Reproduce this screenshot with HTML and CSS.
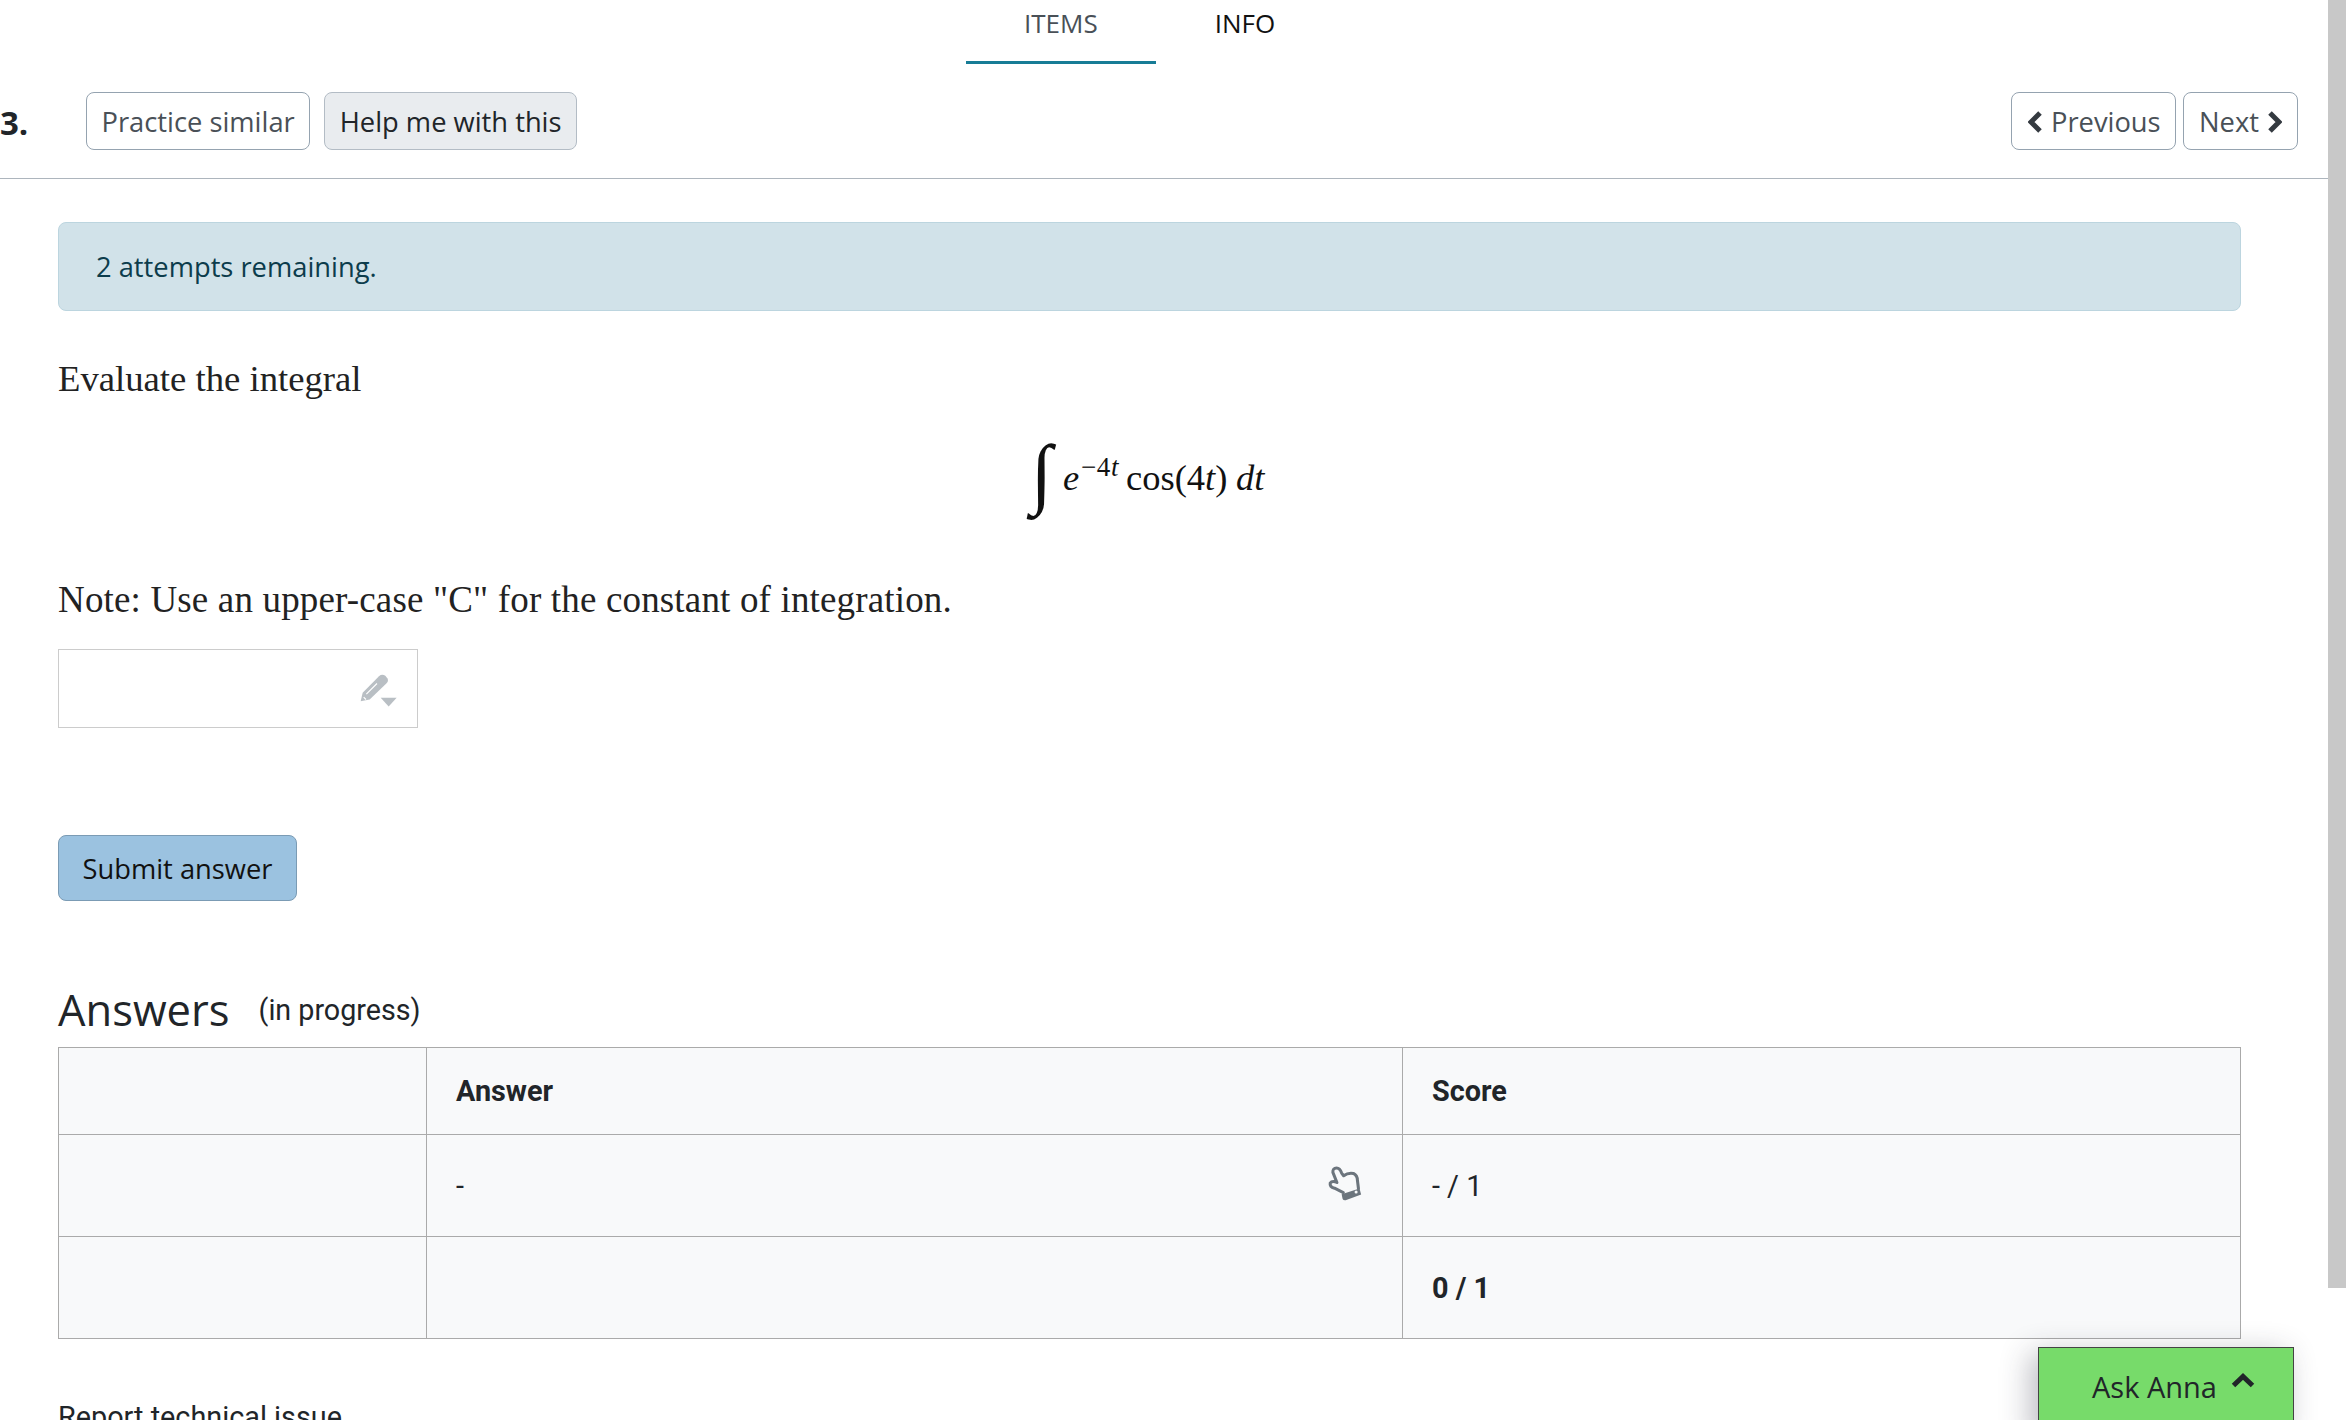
FILE: index.html
```html
<!DOCTYPE html>
<html lang="en">
<head>
<meta charset="utf-8">
<title>Question 3</title>
<link rel="stylesheet" href="styles.css">
</head>
<body>
<div class="page">
  <nav class="tabs">
    <a class="tab tab-active">ITEMS</a>
    <a class="tab">INFO</a>
  </nav>
  <header class="toolbar">
    <span class="qnum">3.</span>
    <button class="btn btn-practice">Practice similar</button>
    <button class="btn btn-help">Help me with this</button>
    <span class="spacer"></span>
    <button class="btn btn-prev">
      <svg class="chev" viewBox="0 0 14 22"><polyline points="12,2 3,11 12,20"/></svg>
      Previous
    </button>
    <button class="btn btn-next">
      Next
      <svg class="chev" viewBox="0 0 14 22"><polyline points="2,2 11,11 2,20"/></svg>
    </button>
  </header>
  <main class="content">
    <div class="alert">2 attempts remaining.</div>
    <p class="prose prose-first">Evaluate the integral</p>
    <div class="math">
      <span class="m-int">∫</span>
      <span class="m-e">e</span>
      <span class="m-sup"><span class="m-minus">−</span>4<i>t</i></span>
      <span class="m-fn">cos(4<i>t</i>)</span>
      <span class="m-dt">dt</span>
    </div>
    <p class="prose prose-note">Note: Use an upper-case "C" for the constant of integration.</p>
    <div class="answer-input">
      <svg class="pencil" viewBox="180 68 120 104">
        <path class="pencil-body" d="M185 152 L191 127 L240 77 Q249 69 259 76 L265 83 Q270 91 262 99 L212 147 Z"/>
        <path class="pencil-cut" d="M202 131 L234 99 M194 140 L201 147"/>
        <polygon class="pencil-body" points="245,142 293,142 269,168"/>
      </svg>
    </div>
    <button class="submit">Submit answer</button>
    <div class="answers-head">
      <h2 class="answers-title">Answers</h2>
      <span class="answers-note">(in progress)</span>
    </div>
    <table class="answers">
      <colgroup><col class="c1"><col class="c2"><col class="c3"></colgroup>
      <tr class="r-head"><th></th><th>Answer</th><th>Score</th></tr>
      <tr class="r-body">
        <td></td>
        <td><div class="answer-cell"><span>-</span>
          <svg class="hand" viewBox="144 104 106 110">
            <path class="hand-line" d="M192 186 L166 173 Q151 169 153 158 Q159 149 173 156 L161 126 Q160 113 172 113 Q182 113 187 128 L193 136 Q206 126 222 129 Q234 135 234 150 L237 174"/>
            <path class="hand-fill" d="M187 191 L240 174 L245 192 L199 209 Q192 210 190 205 Z"/>
            <circle class="hand-dot" cx="230" cy="184" r="4.5"/>
          </svg></div></td>
        <td>- / 1</td>
      </tr>
      <tr class="r-body r-total"><td></td><td></td><td>0 / 1</td></tr>
    </table>
    <a class="report">Report technical issue</a>
  </main>
</div>
<div class="scrollbar"></div>
<button class="ask">Ask Anna
  <svg class="caret" viewBox="0 0 24 15"><polyline points="2.5,12.5 12,3.5 21.5,12.5"/></svg>
</button>
</body>
</html>
```
FILE: styles.css
```css
* { box-sizing: border-box; }
html, body { margin: 0; height: 1420px; overflow: hidden; background: #fff; }
body { font-family: "Open Sans", sans-serif; color: #212529; position: relative; }
.page { width: 2328px; }

.tabs { display: flex; gap: 1px; height: 64px; padding-left: 966px; }
.tab { height: 64px; padding: 7px 58px 0; font-size: 26px; line-height: 32px; color: #111; }
.tab-active { color: #495057; border-bottom: 3px solid #177c96; }

.toolbar { display: flex; align-items: center; height: 115px; padding: 0 30px 0 0; border-bottom: 1.5px solid #adb5bd; }
.qnum { width: 86px; padding-top: 2px; font-size: 33px; font-weight: 700; color: #212529; }
.spacer { flex: 1; }
.btn { display: flex; align-items: center; height: 58px; padding: 1px 14.5px 0; font: 400 27.3px/1 "Open Sans", sans-serif; color: #495057; background: #fff; border: 1.5px solid #95a3b0; border-radius: 8px; }
.btn-help { margin-left: 14px; color: #212529; background: #e9ecef; border-color: #b3bcc5; }
.btn-prev { gap: 9px; width: 165px; padding: 1px 0 0 16px; }
.btn-next { gap: 9px; width: 115px; margin-left: 7px; padding: 1px 0 0 15px; }
.chev { width: 14px; height: 22px; }
.chev polyline { fill: none; stroke: #343a40; stroke-width: 5; }

.content { padding: 43px 87px 0 58px; }
.alert { height: 89px; padding: 0 37px; display: flex; align-items: center; font-size: 27.3px; color: #0c3c4c; background: #d1e2e9; border: 1.5px solid #bcd5df; border-radius: 8px; }
.prose { margin: 0; font-family: "Liberation Serif", serif; line-height: 48px; color: #222; }
.prose-first { margin-top: 44px; font-size: 36.7px; }
.prose-note { margin-top: 41px; font-size: 37px; letter-spacing: .16px; }

.math { display: flex; align-items: baseline; height: 132px; padding-left: 974px; font-family: "Liberation Serif", serif; color: #111; font-size: 36.5px; line-height: 1; padding-top: 57px; }
.m-int { align-self: flex-start; font-size: 78px; font-style: italic; line-height: 60px; transform: translate(-1px, -17px); width: 31px; }
.m-e { font-style: italic; width: 18px; }
.m-sup { font-size: 27px; letter-spacing: .6px; position: relative; top: -14px; width: 45px; white-space: nowrap; }
.m-minus { color: #333; }
.m-fn { width: 110px; }
.m-dt { font-style: italic; }

.answer-input { position: relative; width: 360px; height: 79px; margin-top: 25px; background: #fff; border: 1.5px solid #ccc; }
.pencil { position: absolute; left: 300px; top: 23px; width: 40px; height: 35px; }
.pencil-body { fill: #b9bfc4; }
.pencil-cut { fill: none; stroke: #fff; stroke-width: 3.5; }

.submit { display: block; width: 239px; height: 66px; margin-top: 107px; padding: 2px 0 0; font: 400 27.3px/1 "Open Sans", sans-serif; color: #111; background: #9bc2e0; border: 1.5px solid #7b9bb4; border-radius: 8px; }

.answers-head { display: flex; align-items: center; gap: 29px; margin-top: 72px; height: 74px; }
.answers-title { margin: 0; font-size: 43.5px; font-weight: 400; line-height: 66px; color: #212529; }
.answers-note { font-family: Roboto, sans-serif; font-size: 28.7px; color: #212529; }

.answers { width: 2183px; border-collapse: collapse; table-layout: fixed; background: #f8f9fa; font-family: Roboto, sans-serif; font-size: 28.8px; color: #212529; }
.c1 { width: 368px; }
.c2 { width: 976px; }
.answers th, .answers td { padding: 0 29px; border: 1.5px solid #aaa; text-align: left; vertical-align: middle; }
.r-head { height: 87px; }
.r-head th { font-weight: 700; }
.r-body { height: 102px; }
.r-total td { font-weight: 700; }
.answer-cell { display: flex; align-items: center; justify-content: space-between; padding-right: 10px; }
.hand { width: 36px; height: 37px; position: relative; top: -2px; }
.hand-line { fill: none; stroke: #6c757d; stroke-width: 9; stroke-linejoin: round; stroke-linecap: round; }
.hand-fill { fill: #6c757d; }
.hand-dot { fill: #f8f9fa; }

.report { display: block; margin-top: 62px; font-family: Roboto, sans-serif; font-size: 28.8px; line-height: 32px; color: #212529; }

.scrollbar { position: absolute; top: 0; right: 0; width: 18px; height: 1288px; background: #c8c8c8; }
.ask { position: absolute; left: 2038px; top: 1347px; display: flex; align-items: flex-start; gap: 14px; width: 256px; height: 90px; padding: 20px 0 0 53px; font: 400 29px/1.3 "Open Sans", sans-serif; color: #212529; background: #77db6a; border: 1.5px solid #444; box-shadow: -8px 6px 28px rgba(40, 40, 60, .3); }
.caret { width: 24px; height: 15px; margin-top: 5px; }
.caret polyline { fill: none; stroke: #212529; stroke-width: 5; }
```
